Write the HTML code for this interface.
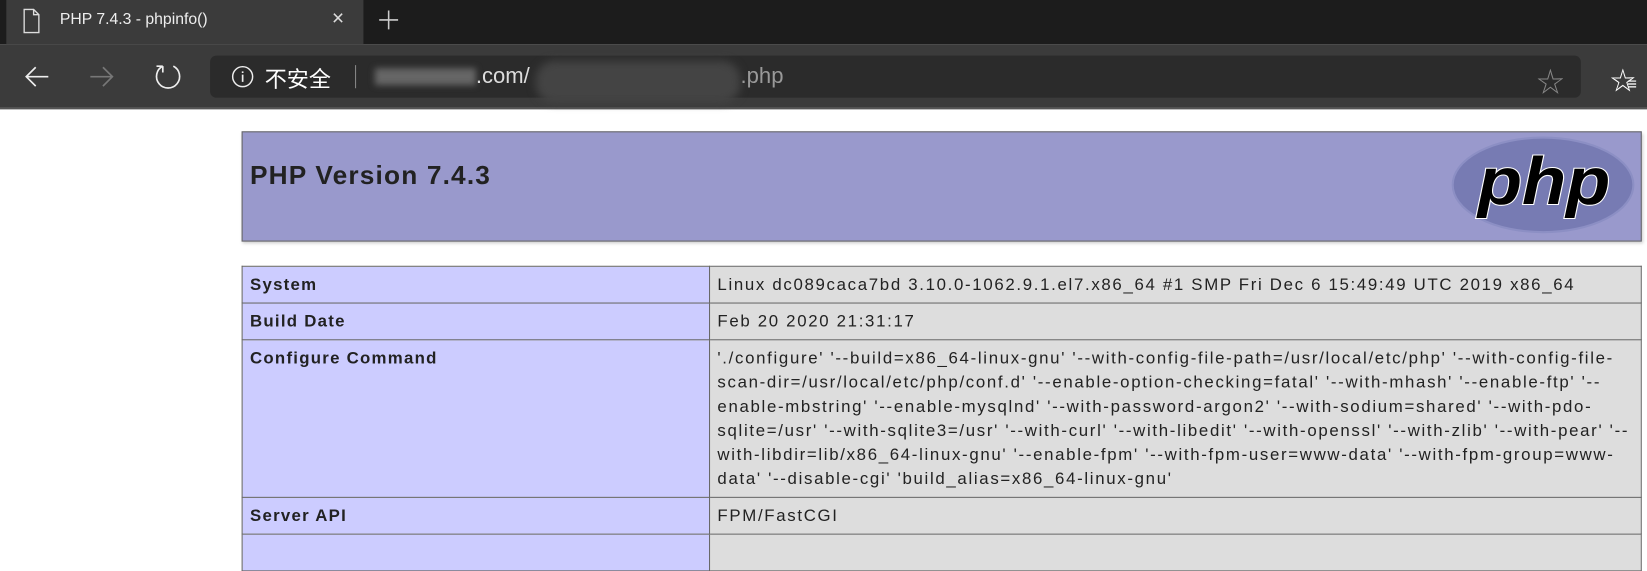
<!DOCTYPE html>
<html><head><meta charset="utf-8"><style>
*{margin:0;padding:0;box-sizing:border-box}
html,body{width:1647px;height:537px;overflow:hidden;background:#fff}
body{font-family:"Liberation Sans","Noto Sans CJK SC",sans-serif}
#w{position:absolute;left:0;top:0;width:1568px;height:512px;transform:scale(1.0504);transform-origin:0 0}
.a{position:absolute}
.tabbar{left:0;top:0;width:1568px;height:42px;background:#1c1c1c}
.tab{left:6px;top:0;width:340px;height:42px;background:#3b3b3b}
.tool{left:0;top:42px;width:1568px;height:62px;background:#3b3b3b;border-bottom:2px solid #555}
.url{left:200px;top:53px;width:1305px;height:40px;background:#2b2b2b;border-radius:6px}
.hdr{left:230px;top:125px;width:1333px;height:105px;background:#9999cc;border:1px solid #666;box-shadow:1px 2px 3px #ccc}
table{position:absolute;left:230px;top:253px;width:1333px;border-collapse:collapse;font-size:16px;color:#222;letter-spacing:1.6px;table-layout:fixed}
td{border:1px solid #666;padding:6px 7px 5px;vertical-align:top;line-height:23px;white-space:nowrap;overflow:hidden}
td.e{background:#ccccff;font-weight:bold;letter-spacing:1.2px}
td.v{background:#ddd}
</style></head><body><div id="w">
<div class="a tabbar"></div>
<div class="a tab"></div>
<svg class="a" style="left:22px;top:8px" width="16" height="24"><path d="M1 1h9l5 5v17H1z M10 1v5h5" fill="none" stroke="#ddd" stroke-width="1.3"/></svg>
<div class="a" style="left:57px;top:10px;color:#eee;font-size:15px">PHP 7.4.3 - phpinfo()</div>
<div class="a" style="left:316px;top:7px;color:#ddd;font-size:20px">×</div>
<svg class="a" style="left:360px;top:9px" width="20" height="20"><path d="M10 1v18M1 10h18" stroke="#ccc" stroke-width="1.5"/></svg>
<div class="a tool"></div>
<div class="a url"></div>
<svg class="a" style="left:22px;top:60px" width="26" height="26"><path d="M24 13H3M12 4l-9 9 9 9" fill="none" stroke="#eee" stroke-width="1.6"/></svg>
<svg class="a" style="left:84px;top:60px" width="26" height="26"><path d="M2 13h21M14 4l9 9-9 9" fill="none" stroke="#777" stroke-width="1.6"/></svg>
<svg class="a" style="left:146px;top:58px" width="28" height="30"><path d="M9 5A11 11 0 1 0 19 5M9 5v6M9 5H3" fill="none" stroke="#eee" stroke-width="1.6"/></svg>
<svg class="a" style="left:220px;top:62px" width="22" height="22"><circle cx="11" cy="11" r="9.5" fill="none" stroke="#eee" stroke-width="1.4"/><path d="M11 9v7M11 6v1.5" stroke="#eee" stroke-width="1.6"/></svg>
<div class="a" style="left:252px;top:60px;color:#fff;font-size:21px">不安全</div>
<div class="a" style="left:338px;top:62px;width:1px;height:22px;background:#888"></div>
<div class="a" style="left:357px;top:65px;width:96px;height:16px;background:#666;filter:blur(3px)"></div>
<div class="a" style="left:453px;top:61px;color:#ddd;font-size:21px">.com/</div>
<div class="a" style="left:510px;top:58px;width:195px;height:40px;background:#444;filter:blur(4px);border-radius:18px"></div>
<div class="a" style="left:705px;top:61px;color:#999;font-size:21px">.php</div>
<div class="a" style="left:1463px;top:58px;color:#888;font-size:26px">☆</div>
<div class="a" style="left:1533px;top:57px;color:#fff;font-size:24px">☆<span style="font-size:16px;margin-left:-8px">≡</span></div>
<div class="a hdr"></div>
<div class="a" style="left:238px;top:153px;font-size:25px;font-weight:bold;color:#222;letter-spacing:1.1px">PHP Version 7.4.3</div>
<svg class="a" style="left:1380px;top:128px" width="180" height="100"><ellipse cx="89" cy="48" rx="86" ry="45" fill="#777bb3" stroke="#8c8fc4" stroke-width="2"/><text x="27" y="66" textLength="126" lengthAdjust="spacingAndGlyphs" font-family="Liberation Sans" font-weight="bold" font-style="italic" font-size="64" fill="#000" stroke="#fff" stroke-width="2" paint-order="stroke">php</text></svg>
<table>
<colgroup><col style="width:445px"><col></colgroup>
<tr><td class="e">System</td><td class="v">Linux dc089caca7bd 3.10.0-1062.9.1.el7.x86_64 #1 SMP Fri Dec 6 15:49:49 UTC 2019 x86_64</td></tr>
<tr><td class="e">Build Date</td><td class="v">Feb 20 2020 21:31:17</td></tr>
<tr><td class="e">Configure Command</td><td class="v">'./configure' '--build=x86_64-linux-gnu' '--with-config-file-path=/usr/local/etc/php' '--with-config-file-<br>scan-dir=/usr/local/etc/php/conf.d' '--enable-option-checking=fatal' '--with-mhash' '--enable-ftp' '--<br>enable-mbstring' '--enable-mysqlnd' '--with-password-argon2' '--with-sodium=shared' '--with-pdo-<br>sqlite=/usr' '--with-sqlite3=/usr' '--with-curl' '--with-libedit' '--with-openssl' '--with-zlib' '--with-pear' '--<br>with-libdir=lib/x86_64-linux-gnu' '--enable-fpm' '--with-fpm-user=www-data' '--with-fpm-group=www-<br>data' '--disable-cgi' 'build_alias=x86_64-linux-gnu'</td></tr>
<tr><td class="e">Server API</td><td class="v">FPM/FastCGI</td></tr>
<tr><td class="e">&nbsp;</td><td class="v">&nbsp;</td></tr>
</table>
</div></body></html>
